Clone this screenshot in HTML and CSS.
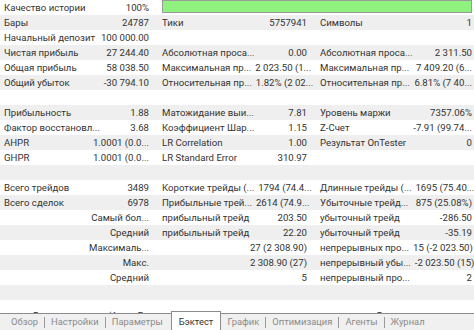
FILE: index.html
```html
<!DOCTYPE html>
<html lang="ru">
<head>
    <meta charset="UTF-8">
    <title>Бэктест</title>
    <link rel="stylesheet" href="styles.css">
</head>
<body>
    <div id="report">
        <div class="row">
            <div class="cell"><span class="label">Качество истории</span><span class="value">100%</span></div>
            <div class="quality"></div>
        </div>
        <div class="row">
            <div class="cell"><span class="label">Бары</span><span class="value">24787</span></div>
            <div class="cell"><span class="label">Тики</span><span class="value">5757941</span></div>
            <div class="cell"><span class="label">Символы</span><span class="value">1</span></div>
        </div>
        <div class="row">
            <div class="cell"><span class="label">Начальный депозит</span><span class="value">100 000.00</span></div>
            <div class="cell"></div>
            <div class="cell"></div>
        </div>
        <div class="row">
            <div class="cell"><span class="label">Чистая прибыль</span><span class="value">27 244.40</span></div>
            <div class="cell"><span class="label">Абсолютная проса...</span><span class="value">0.00</span></div>
            <div class="cell"><span class="label">Абсолютная проса...</span><span class="value">2 311.50</span></div>
        </div>
        <div class="row">
            <div class="cell"><span class="label">Общая прибыль</span><span class="value">58 038.50</span></div>
            <div class="cell"><span class="label">Максимальная пр...</span><span class="value">2 023.50 (1...</span></div>
            <div class="cell"><span class="label">Максимальная пр...</span><span class="value">7 409.20 (6...</span></div>
        </div>
        <div class="row">
            <div class="cell"><span class="label">Общий убыток</span><span class="value">-30 794.10</span></div>
            <div class="cell"><span class="label">Относительная пр...</span><span class="value">1.82% (2 02...</span></div>
            <div class="cell"><span class="label">Относительная пр...</span><span class="value">6.81% (7 40...</span></div>
        </div>
        <div class="row"></div>
        <div class="row">
            <div class="cell"><span class="label">Прибыльность</span><span class="value">1.88</span></div>
            <div class="cell"><span class="label">Матожидание выи...</span><span class="value">7.81</span></div>
            <div class="cell"><span class="label">Уровень маржи</span><span class="value">7357.06%</span></div>
        </div>
        <div class="row">
            <div class="cell"><span class="label">Фактор восстановл...</span><span class="value">3.68</span></div>
            <div class="cell"><span class="label">Коэффициент Шар...</span><span class="value">1.15</span></div>
            <div class="cell"><span class="label">Z-Счет</span><span class="value">-7.91 (99.74...</span></div>
        </div>
        <div class="row">
            <div class="cell"><span class="label">AHPR</span><span class="value">1.0001 (0.0...</span></div>
            <div class="cell"><span class="label">LR Correlation</span><span class="value">1.00</span></div>
            <div class="cell"><span class="label">Результат OnTester</span><span class="value">0</span></div>
        </div>
        <div class="row">
            <div class="cell"><span class="label">GHPR</span><span class="value">1.0001 (0.0...</span></div>
            <div class="cell"><span class="label">LR Standard Error</span><span class="value">310.97</span></div>
            <div class="cell"></div>
        </div>
        <div class="row"></div>
        <div class="row">
            <div class="cell"><span class="label">Всего трейдов</span><span class="value">3489</span></div>
            <div class="cell"><span class="label">Короткие трейды (...</span><span class="value">1794 (74.4...</span></div>
            <div class="cell"><span class="label">Длинные трейды (...</span><span class="value">1695 (75.40...</span></div>
        </div>
        <div class="row">
            <div class="cell"><span class="label">Всего сделок</span><span class="value">6978</span></div>
            <div class="cell"><span class="label">Прибыльные трей...</span><span class="value">2614 (74.9...</span></div>
            <div class="cell"><span class="label">Убыточные трейд...</span><span class="value">875 (25.08%)</span></div>
        </div>
        <div class="row">
            <div class="cell"><span class="value">Самый бол...</span></div>
            <div class="cell"><span class="label">прибыльный трейд</span><span class="value">203.50</span></div>
            <div class="cell"><span class="label">убыточный трейд</span><span class="value">-286.50</span></div>
        </div>
        <div class="row">
            <div class="cell"><span class="value">Средний</span></div>
            <div class="cell"><span class="label">прибыльный трейд</span><span class="value">22.20</span></div>
            <div class="cell"><span class="label">убыточный трейд</span><span class="value">-35.19</span></div>
        </div>
        <div class="row">
            <div class="cell"><span class="value">Максималь...</span></div>
            <div class="cell"><span class="value">27 (2 308.90)</span></div>
            <div class="cell"><span class="label">непрерывных про...</span><span class="value">15 (-2 023.50)</span></div>
        </div>
        <div class="row">
            <div class="cell"><span class="value">Макс.</span></div>
            <div class="cell"><span class="value">2 308.90 (27)</span></div>
            <div class="cell"><span class="label">непрерывный убы...</span><span class="value">-2 023.50 (15)</span></div>
        </div>
        <div class="row">
            <div class="cell"><span class="value">Средний</span></div>
            <div class="cell"><span class="value">5</span></div>
            <div class="cell"><span class="label">непрерывный про...</span><span class="value">2</span></div>
        </div>
        <div class="row"></div>
        <div class="charts">
            <span class="chart-title hours">Входы по часам (Азия, Европа, США)</span>
            <span class="chart-title days">Входы по дням недели</span>
            <span class="chart-title months">Входы по месяцам</span>
        </div>
    </div>
    <div id="tabs">
        <span class="tab">Обзор</span>
        <span class="sep"></span>
        <span class="tab">Настройки</span>
        <span class="sep"></span>
        <span class="tab">Параметры</span>
        <span class="tab active">Бэктест</span>
        <span class="tab">График</span>
        <span class="sep"></span>
        <span class="tab">Оптимизация</span>
        <span class="sep"></span>
        <span class="tab">Агенты</span>
        <span class="sep"></span>
        <span class="tab">Журнал</span>
    </div>
</body>
</html>
```

FILE: styles.css
```css
body {
    margin: 0;
    padding: 0;
    width: 474px;
    height: 330px;
    overflow: hidden;
    display: flex;
    flex-direction: column;
    font-family: Roboto, "Noto Sans", sans-serif;
    font-size: 9.6px;
    color: #333;
    background: #fff;
}
#report {
    height: 313px;
    overflow: hidden;
    flex: none;
}
.row {
    display: grid;
    grid-template-columns: 158px 158px 158px;
    height: 15px;
    line-height: 15px;
}
.row:nth-child(even) {
    background-color: #efefef;
}
.cell {
    display: flex;
    justify-content: space-between;
    gap: 4px;
    padding: 0 9px 0 4px;
    white-space: nowrap;
    min-width: 0;
}
.cell:nth-child(3) {
    padding-right: 2px;
}
.value {
    margin-left: auto;
    text-align: right;
}
.quality {
    grid-column: span 2;
    margin: 0 2px 2px 4px;
    background-color: #8ff27e;
    border: 1px solid #9a9a9a;
}
.charts {
    display: flex;
    height: 20px;
    padding-top: 10px;
    white-space: nowrap;
}
.hours {
    margin-left: 33px;
}
.days {
    margin-left: 4px;
}
.months {
    margin-left: 70px;
}
#tabs {
    flex: 1;
    display: flex;
    align-items: stretch;
    padding-left: 5px;
    background-color: #f0f0f0;
    border-top: 1px solid #8c8c8c;
    color: #8a8a8a;
    font-size: 9.4px;
    line-height: 16px;
}
.tab {
    padding: 0 6px;
    white-space: nowrap;
}
.tab.active {
    margin-top: -3px;
    margin-left: 2px;
    padding: 2px 7px 0;
    background-color: #fff;
    border: 1px solid #8c8c8c;
    border-bottom: none;
    color: #333;
}
.sep {
    width: 1px;
    height: 11px;
    margin-top: 3px;
    background-color: #9a9a9a;
}
```
